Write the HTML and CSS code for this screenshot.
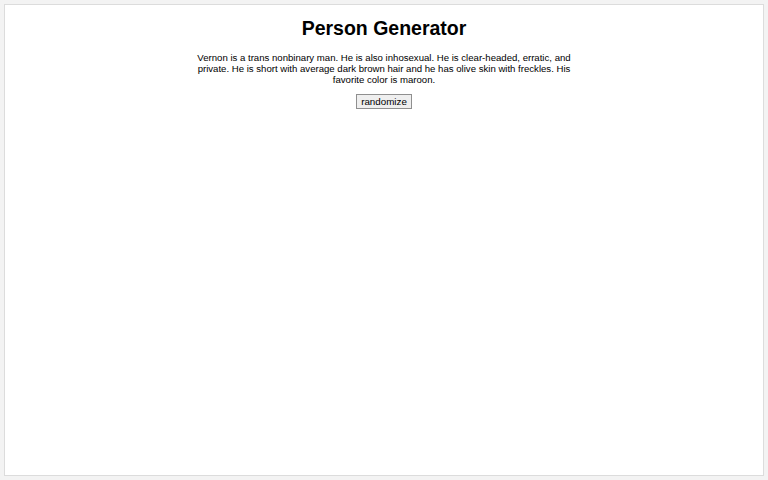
FILE: index.html
```html
<!DOCTYPE html>
<html>
<head>
<meta charset="utf-8">
<link rel="stylesheet" href="styles.css">
</head>
<body>
<div class="panel">
  <h1 class="title">Person Generator</h1>
  <p class="desc">Vernon is a trans nonbinary man. He is also inhosexual. He is clear-headed, erratic, and private. He is short with average dark brown hair and he has olive skin with freckles. His favorite color is maroon.</p>
  <div class="actions"><button class="btn">randomize</button></div>
</div>
</body>
</html>
```
FILE: styles.css
```css
html, body {
  margin: 0;
  padding: 0;
}
body {
  background: #f3f3f3;
  padding: 4px 4px 4px 4px;
  font-family: "Liberation Sans", Arial, sans-serif;
  color: #000;
}
.panel {
  background: #fff;
  border: 1px solid #dcdcdc;
  height: 472px;
  box-sizing: border-box;
  display: flex;
  flex-direction: column;
  align-items: center;
  padding-top: 13px;
}
.title {
  margin: 0;
  font-size: 19.5px;
  font-weight: bold;
  line-height: 20px;
}
.desc {
  margin: 14px 0 0 0;
  width: 378px;
  text-align: center;
  font-size: 9.6px;
  line-height: 11px;
}
.actions {
  margin-top: 6px;
}
.btn {
  font-family: "Liberation Sans", Arial, sans-serif;
  font-size: 9.8px;
  line-height: 11px;
  padding: 1px 4px;
  border: 1px solid #8f8f8f;
  background: #efefef;
  color: #000;
  border-radius: 0;
}
```
